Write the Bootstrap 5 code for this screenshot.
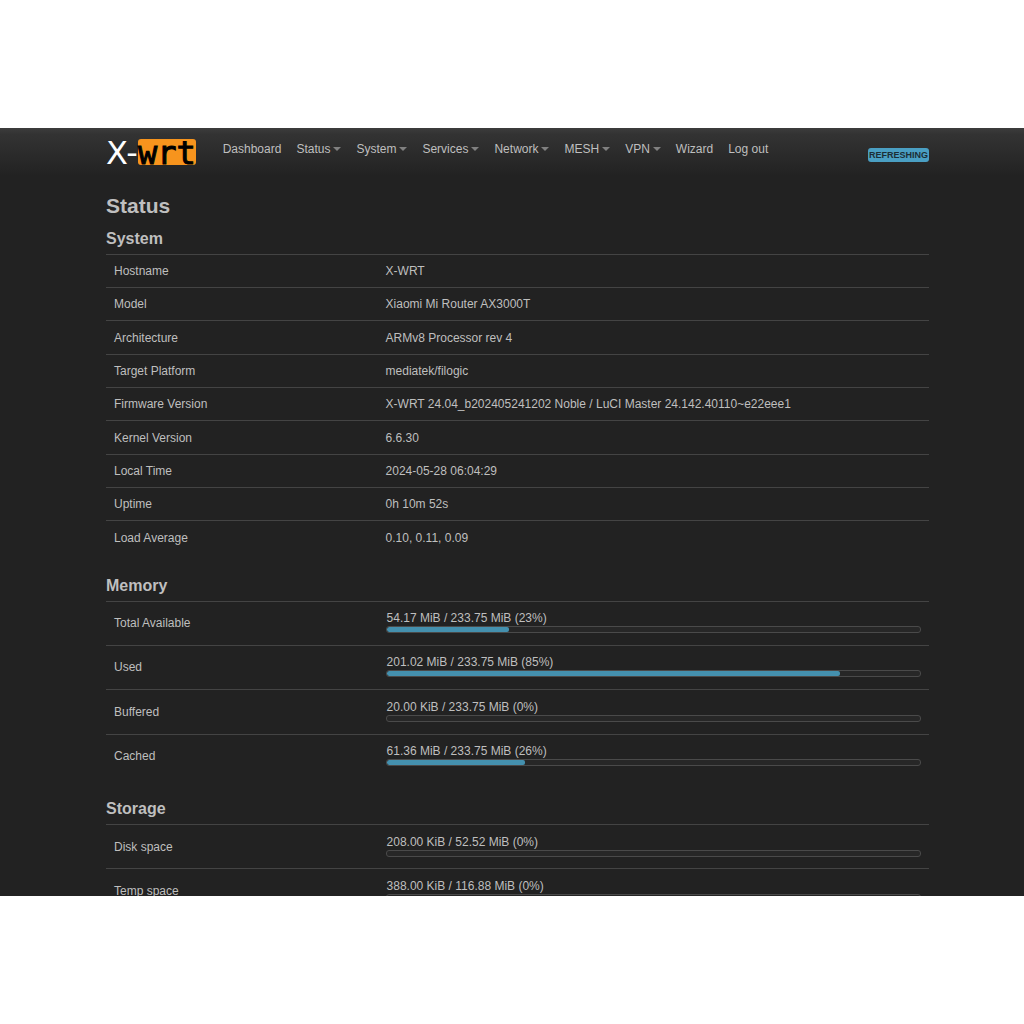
<!DOCTYPE html>
<html lang="en">
<head>
<meta charset="utf-8">
<meta name="viewport" content="width=device-width, initial-scale=1">
<title>X-WRT - Status</title>
<link href="https://cdn.jsdelivr.net/npm/bootstrap@5.3.0/dist/css/bootstrap.min.css" rel="stylesheet">
<style>
body { background: #fff; font-family: "Liberation Sans", Arial, sans-serif; font-size: 12px; line-height: 16px; padding: 12.5vh 0; }
.screen { height: 75vh; overflow: hidden; background: #222; color: #bfbfbf; }
.topbar { height: 60px; padding: 0 95px 0 106px; background: linear-gradient(#3c3c3c 0, #333 6px, #222 48px); }
.brand { color: #fff; height: 60px; text-decoration: none; padding: 11px 0 0; }
.brand-x { font: 32px/28px "DejaVu Sans", sans-serif; }
.brand-wrt { font: 32px/28px "DejaVu Sans Mono", monospace; color: #000; background: #f7941d; border-radius: 3px; height: 26px; -webkit-text-stroke: 1px #000; }
.topbar .nav { padding: 13px 0 0 20px; }
.topbar .nav-link { color: #bfbfbf; padding: 0 8px 0 7px; white-space: nowrap; }
.topbar .dropdown-toggle::after { border-width: 4px 4px 0; border-style: solid; border-color: #808080 transparent transparent; margin-left: 3px; vertical-align: 2px; }
.poll { margin-top: 20px; padding: 0 1px; border: 0; border-radius: 3px; background: #4a9fc3; color: #1c2e36; font-size: 9px; line-height: 14px; font-weight: 700; }
main { padding: 6px 95px 0 106px; }
h1 { font-size: 21px; line-height: 24px; font-weight: 700; margin: 0 0 10px; }
h2 { font-size: 16px; line-height: 22px; font-weight: 700; margin: 0 0 4px; }
.info { width: 100%; table-layout: fixed; margin: 0 0 20px; }
.info th, .info td { border-top: 1px solid #444; padding: 8px; font-weight: 400; vertical-align: middle; height: 33px; }
.info th { width: 33%; }
.info tr:nth-child(3n) > * { height: 34px; }
.usage { margin-bottom: 20px; }
.usage th, .usage td { height: 44px; }
.usage tr:nth-child(3n) > * { height: 45px; }
.usage td { padding: 8px 8px 10px; }
.usage label { display: block; line-height: 15px; padding-left: 1px; }
.meter-track { height: 7px; border: 1px solid #4a4a4a; border-radius: 3px; background: #272727; }
.meter-track .progress-bar { background: #4490ae; border-radius: 2px; }
</style>
<script src="https://cdn.jsdelivr.net/npm/bootstrap@5.3.0/dist/js/bootstrap.bundle.min.js"></script>
</head>
<body>
<div class="screen">
<header class="topbar d-flex align-items-start">
  <a class="brand d-flex" href="#"><span class="brand-x">X-</span><span class="brand-wrt">wrt</span></a>
  <ul class="nav flex-nowrap">
    <li class="nav-item"><a class="nav-link" href="#">Dashboard</a></li>
    <li class="nav-item"><a class="nav-link dropdown-toggle" href="#">Status</a></li>
    <li class="nav-item"><a class="nav-link dropdown-toggle" href="#">System</a></li>
    <li class="nav-item"><a class="nav-link dropdown-toggle" href="#">Services</a></li>
    <li class="nav-item"><a class="nav-link dropdown-toggle" href="#">Network</a></li>
    <li class="nav-item"><a class="nav-link dropdown-toggle" href="#">MESH</a></li>
    <li class="nav-item"><a class="nav-link dropdown-toggle" href="#">VPN</a></li>
    <li class="nav-item"><a class="nav-link" href="#">Wizard</a></li>
    <li class="nav-item"><a class="nav-link" href="#">Log out</a></li>
  </ul>
  <button type="button" class="poll ms-auto">REFRESHING</button>
</header>
<main>
  <h1>Status</h1>
  <h2>System</h2>
  <table class="info"><tbody>
    <tr><th scope="row">Hostname</th><td>X-WRT</td></tr>
    <tr><th scope="row">Model</th><td>Xiaomi Mi Router AX3000T</td></tr>
    <tr><th scope="row">Architecture</th><td>ARMv8 Processor rev 4</td></tr>
    <tr><th scope="row">Target Platform</th><td>mediatek/filogic</td></tr>
    <tr><th scope="row">Firmware Version</th><td>X-WRT 24.04_b202405241202 Noble / LuCI Master 24.142.40110~e22eee1</td></tr>
    <tr><th scope="row">Kernel Version</th><td>6.6.30</td></tr>
    <tr><th scope="row">Local Time</th><td>2024-05-28 06:04:29</td></tr>
    <tr><th scope="row">Uptime</th><td>0h 10m 52s</td></tr>
    <tr><th scope="row">Load Average</th><td>0.10, 0.11, 0.09</td></tr>
  </tbody></table>
  <h2>Memory</h2>
  <table class="info usage"><tbody>
    <tr><th scope="row">Total Available</th><td><label id="m1">54.17 MiB / 233.75 MiB (23%)</label><div class="progress meter-track" role="progressbar" aria-labelledby="m1"><div class="progress-bar" style="width:23%"></div></div></td></tr>
    <tr><th scope="row">Used</th><td><label id="m2">201.02 MiB / 233.75 MiB (85%)</label><div class="progress meter-track" role="progressbar" aria-labelledby="m2"><div class="progress-bar" style="width:85%"></div></div></td></tr>
    <tr><th scope="row">Buffered</th><td><label id="m3">20.00 KiB / 233.75 MiB (0%)</label><div class="progress meter-track" role="progressbar" aria-labelledby="m3"><div class="progress-bar" style="width:0%"></div></div></td></tr>
    <tr><th scope="row">Cached</th><td><label id="m4">61.36 MiB / 233.75 MiB (26%)</label><div class="progress meter-track" role="progressbar" aria-labelledby="m4"><div class="progress-bar" style="width:26%"></div></div></td></tr>
  </tbody></table>
  <h2>Storage</h2>
  <table class="info usage"><tbody>
    <tr><th scope="row">Disk space</th><td><label id="s1">208.00 KiB / 52.52 MiB (0%)</label><div class="progress meter-track" role="progressbar" aria-labelledby="s1"><div class="progress-bar" style="width:0%"></div></div></td></tr>
    <tr><th scope="row">Temp space</th><td><label id="s2">388.00 KiB / 116.88 MiB (0%)</label><div class="progress meter-track" role="progressbar" aria-labelledby="s2"><div class="progress-bar" style="width:0%"></div></div></td></tr>
  </tbody></table>
</main>
</div>
</body>
</html>
